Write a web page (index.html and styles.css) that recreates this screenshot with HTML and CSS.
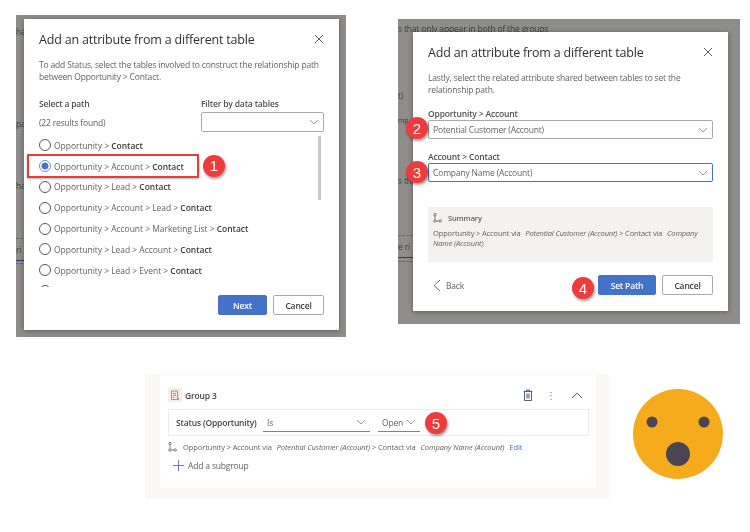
FILE: index.html
```html
<!DOCTYPE html>
<html>
    <head>
        <title>Add an attribute from a different table</title>
        <link rel="stylesheet" href="styles.css">
    </head>
    <body>
        <div class="top-row">
            <section class="shot shot-left">
                <span class="peek" style="left:0;top:11px">ha</span>
                <span class="peek" style="left:0;top:103px">pa</span>
                <span class="peek" style="left:0;top:165px">ha</span>
                <span class="peek" style="left:0;top:229px">ri</span>
                <i class="peek-dash" style="top:223px"></i>
                <i class="peek-blue" style="top:245px"></i>
                <i class="peek-dash" style="top:248px"></i>
                <div class="dialog">
                    <div class="dialog-head">
                        <h1>Add an attribute from a different table</h1>
                        <svg class="close" width="10" height="10" viewBox="0 0 10 10"><path d="M1 1l8 8M9 1l-8 8"/></svg>
                    </div>
                    <p class="intro">To add Status, select the tables involved to construct the relationship path between Opportunity &gt; Contact.</p>
                    <div class="path-head">
                        <div>
                            <div class="label">Select a path</div>
                            <div class="found">(22 results found)</div>
                        </div>
                        <div>
                            <div class="label">Filter by data tables</div>
                            <div class="select filter-select">
                                <svg class="chev" width="10" height="6" viewBox="0 0 10 6"><path d="M1 1l4 4 4-4"/></svg>
                            </div>
                        </div>
                    </div>
                    <div class="path-list">
                        <div class="scrollbar"></div>
                        <div class="path"><span class="radio"></span><span>Opportunity &gt; <b>Contact</b></span></div>
                        <div class="path path-picked">
                            <span class="radio radio-on"></span><span>Opportunity &gt; Account &gt; <b>Contact</b></span>
                            <span class="picked-box"></span>
                            <span class="badge badge-one">1</span>
                        </div>
                        <div class="path"><span class="radio"></span><span>Opportunity &gt; Lead &gt; <b>Contact</b></span></div>
                        <div class="path"><span class="radio"></span><span>Opportunity &gt; Account &gt; Lead &gt; <b>Contact</b></span></div>
                        <div class="path"><span class="radio"></span><span>Opportunity &gt; Account &gt; Marketing List &gt; <b>Contact</b></span></div>
                        <div class="path"><span class="radio"></span><span>Opportunity &gt; Lead &gt; Account &gt; <b>Contact</b></span></div>
                        <div class="path"><span class="radio"></span><span>Opportunity &gt; Lead &gt; Event &gt; <b>Contact</b></span></div>
                        <div class="path"><span class="radio"></span></div>
                    </div>
                    <div class="dialog-foot left-foot">
                        <button class="btn btn-blue btn-next">Next</button>
                        <button class="btn">Cancel</button>
                    </div>
                </div>
            </section>

            <section class="shot shot-right">
                <span class="peek" style="left:0;top:4px">s that only appear in both of the groups</span>
                <span class="peek" style="left:0;top:71px">t)</span>
                <span class="peek peek-small" style="left:0;top:96px">mp</span>
                <span class="peek" style="left:0;top:156px">s th</span>
                <span class="peek" style="left:0;top:222px">e ri</span>
                <i class="peek-dash" style="top:216px"></i>
                <i class="peek-blue" style="top:238px"></i>
                <i class="peek-dash" style="top:242px"></i>
                <div class="dialog">
                    <div class="dialog-head">
                        <h1>Add an attribute from a different table</h1>
                        <svg class="close" width="10" height="10" viewBox="0 0 10 10"><path d="M1 1l8 8M9 1l-8 8"/></svg>
                    </div>
                    <p class="intro">Lastly, select the related attribute shared between tables to set the relationship path.</p>
                    <div class="field field-first">
                        <div class="label">Opportunity &gt; Account</div>
                        <div class="select">
                            Potential Customer (Account)
                            <svg class="chev" width="10" height="6" viewBox="0 0 10 6"><path d="M1 1l4 4 4-4"/></svg>
                        </div>
                        <span class="badge badge-field">2</span>
                    </div>
                    <div class="field">
                        <div class="label">Account &gt; Contact</div>
                        <div class="select select-focus">
                            Company Name (Account)
                            <svg class="chev" width="10" height="6" viewBox="0 0 10 6"><path d="M1 1l4 4 4-4"/></svg>
                        </div>
                        <span class="badge badge-field">3</span>
                    </div>
                    <div class="summary">
                        <div class="summary-title">
                            <svg class="path-icon" width="9" height="10" viewBox="0 0 9 10"><circle cx="2" cy="1.6" r="1.2"/><circle cx="2" cy="8" r="1.2"/><circle cx="7.2" cy="8" r="1.2"/><path d="M2 3v3.600M3.400 8h2.400"/></svg>
                            Summary
                        </div>
                        <p>Opportunity &gt; Account via <em>Potential Customer (Account)</em> &gt; Contact via <em>Company</em><br><em class="em-wrap">Name (Account)</em></p>
                    </div>
                    <div class="dialog-foot right-foot">
                        <div class="back">
                            <svg width="8" height="13" viewBox="0 0 8 13"><path d="M7 1L1 6.500 7 12"/></svg>
                            Back
                        </div>
                        <div class="foot-buttons">
                            <span class="badge badge-four">4</span>
                            <button class="btn btn-blue btn-set">Set Path</button>
                            <button class="btn">Cancel</button>
                        </div>
                    </div>
                </div>
            </section>
        </div>

        <div class="bottom-row">
            <section class="group-wrap">
                <div class="group">
                    <div class="group-head">
                        <span class="group-icon">
                            <svg width="10" height="11" viewBox="0 0 10 11"><path d="M1.500 1h6v8.500h-6zM3 3.500h3M3 5.500h3M3 7.500h1.500"/><path d="M8.500 8v2"/></svg>
                        </span>
                        <span class="group-name">Group 3</span>
                        <div class="group-tools">
                            <svg class="trash" width="10" height="12" viewBox="0 0 10 12"><path d="M1.500 2.500h7v9h-7zM.5 2.500h9M3.500 2.500v-1.500h3v1.500"/><path class="trash-fill" d="M3.200 4.500h3.600v5h-3.600z"/></svg>
                            <span class="dots">&#8942;</span>
                            <svg class="chev-up" width="12" height="7" viewBox="0 0 12 7"><path d="M1 6l5-5 5 5"/></svg>
                        </div>
                    </div>
                    <div class="condition">
                        <span class="cond-name">Status (Opportunity)</span>
                        <div class="cond-drop cond-op">
                            Is
                            <svg class="chev" width="10" height="6" viewBox="0 0 10 6"><path d="M1 1l4 4 4-4"/></svg>
                        </div>
                        <div class="cond-drop cond-value">
                            Open
                            <svg class="chev" width="10" height="6" viewBox="0 0 10 6"><path d="M1 1l4 4 4-4"/></svg>
                        </div>
                        <span class="badge badge-five">5</span>
                    </div>
                    <div class="path-line">
                        <svg class="path-icon" width="9" height="10" viewBox="0 0 9 10"><circle cx="2" cy="1.6" r="1.2"/><circle cx="2" cy="8" r="1.2"/><circle cx="7.2" cy="8" r="1.2"/><path d="M2 3v3.600M3.400 8h2.400"/></svg>
                        <span>Opportunity &gt; Account via <em>Potential Customer (Account)</em> &gt; Contact via <em>Company Name (Account)</em></span>
                        <a class="edit">Edit</a>
                    </div>
                    <div class="add-sub">
                        <svg width="11" height="11" viewBox="0 0 11 11"><path d="M5.500 0v11M0 5.500h11"/></svg>
                        Add a subgroup
                    </div>
                </div>
            </section>
            <svg class="face" width="90" height="90" viewBox="0 0 90 90">
                <circle cx="45" cy="45" r="45" fill="#f5ab1b"/>
                <circle cx="19" cy="33" r="5.500" fill="#4a4552"/>
                <circle cx="71" cy="33" r="5.500" fill="#4a4552"/>
                <circle cx="45" cy="65" r="12" fill="#4a4552"/>
            </svg>
        </div>
    </body>
</html>
```

FILE: styles.css
```css
body{
    margin: 0;
    width: 750px;
    height: 532px;
    overflow: hidden;
    background-color: white;
    font-family: "Open Sans", "Liberation Sans", sans-serif;
    color: rgb(100, 98, 96);
    font-size: 8.5px;
    letter-spacing: -0.17px;
}
b{
    font-weight: 600;
    color: rgb(60, 58, 56);
}
em{
    margin-left: 3px;
    font-style: italic;
}
.em-wrap{
    margin-left: 0;
}
.top-row{
    display: flex;
    align-items: flex-start;
    height: 374px;
}
.shot{
    position: relative;
    overflow: hidden;
    background-color: rgb(142, 141, 140);
    box-sizing: border-box;
    filter: blur(0.35px);
}
.shot-left{
    width: 330px;
    height: 322px;
    margin: 15px 0 0 16px;
    padding: 4px 7px 7px 8px;
}
.shot-right{
    width: 342px;
    height: 305px;
    margin: 19px 0 0 52px;
    padding: 13px 12px 13px 15px;
}
.peek{
    position: absolute;
    font-size: 8.5px;
    line-height: 12px;
    white-space: nowrap;
    color: rgb(60, 60, 60);
}
.peek-small{
    font-size: 7px;
}
.peek-dash{
    position: absolute;
    left: 0;
    width: 15px;
    border-top: 1px dashed rgb(105, 105, 105);
}
.peek-blue{
    position: absolute;
    left: 0;
    width: 15px;
    height: 1px;
    background-color: rgb(50, 60, 110);
}
.dialog{
    position: relative;
    height: 100%;
    box-sizing: border-box;
    padding: 11px 15px 0 15px;
    background-color: white;
    box-shadow: 0 1px 5px rgba(0, 0, 0, 0.35);
}
.dialog-head{
    display: flex;
    justify-content: space-between;
    align-items: center;
    height: 18px;
}
h1{
    margin: 0;
    font-size: 12.5px;
    font-weight: 500;
    letter-spacing: -0.2px;
    color: rgb(50, 49, 48);
}
.close path{
    fill: none;
    stroke: rgb(96, 94, 92);
}
.intro{
    margin: 11px 0 0 0;
    font-size: 8.5px;
    line-height: 12px;
}
.path-head{
    display: grid;
    grid-template-columns: 162px 123px;
    margin-top: 15px;
}
.label{
    font-size: 8.5px;
    font-weight: 600;
    line-height: 12px;
    color: rgb(80, 78, 76);
}
.found{
    margin-top: 7px;
    line-height: 12px;
}
.select{
    position: relative;
    display: flex;
    align-items: center;
    box-sizing: border-box;
    height: 19px;
    padding-left: 4px;
    font-size: 8.5px;
    background-color: white;
    border: 1px solid rgb(170, 170, 170);
    border-radius: 2px;
}
.filter-select{
    height: 20px;
    margin-top: 2px;
}
.select-focus{
    border-color: rgb(68, 114, 201);
}
.chev{
    position: absolute;
    right: 4px;
    top: 50%;
    margin-top: -3px;
}
.chev path{
    fill: none;
    stroke: rgb(160, 158, 156);
}
.path-list{
    position: relative;
    height: 152px;
    overflow: hidden;
    margin: 3px 0 0 -15px;
    padding-left: 15px;
    margin-right: -15px;
}
.scrollbar{
    position: absolute;
    left: 294px;
    top: 1px;
    width: 3px;
    height: 64px;
    background-color: rgb(200, 200, 200);
}
.path{
    position: relative;
    display: flex;
    align-items: center;
    gap: 3px;
    height: 20.8px;
    white-space: pre;
    letter-spacing: -0.04px;
}
.radio{
    box-sizing: border-box;
    width: 12px;
    height: 12px;
    border: 1px solid rgb(85, 85, 85);
    border-radius: 50%;
    background-color: white;
}
.radio-on{
    border-color: rgb(110, 145, 215);
    background: radial-gradient(circle, rgb(68, 114, 201) 3.2px, white 3.8px);
}
.picked-box{
    position: absolute;
    left: -12px;
    top: -2px;
    width: 172px;
    height: 24px;
    box-sizing: border-box;
    border: 2px solid rgb(226, 62, 62);
    box-shadow: 0 1px 2px rgba(0, 0, 0, 0.3);
}
.badge{
    position: absolute;
    width: 22px;
    height: 22px;
    display: flex;
    align-items: center;
    justify-content: center;
    border-radius: 50%;
    background-color: rgb(239, 59, 59);
    color: white;
    font-family: "Liberation Sans", sans-serif;
    font-size: 15px;
    letter-spacing: 0;
    box-shadow: 1px 2px 3px rgba(0, 0, 0, 0.4);
}
.badge-one{
    left: 164px;
    top: -1px;
}
.dialog-foot{
    display: flex;
}
.left-foot{
    justify-content: flex-end;
    gap: 6px;
    margin-top: 8px;
}
.btn{
    box-sizing: border-box;
    width: 51px;
    height: 20px;
    padding: 0;
    font-family: inherit;
    font-size: 8.5px;
    font-weight: 600;
    letter-spacing: inherit;
    color: rgb(60, 58, 56);
    background-color: white;
    border: 1px solid rgb(170, 170, 170);
    border-radius: 2px;
}
.btn-blue{
    color: white;
    background-color: rgb(68, 114, 201);
    border-color: rgb(68, 114, 201);
}
.btn-next{
    width: 49px;
}
.btn-set{
    width: 58px;
}
.field{
    position: relative;
    margin-top: 12px;
}
.badge-field{
    left: -22px;
    bottom: -1px;
}
.field-first .badge-field{
    bottom: 0;
}
.summary{
    margin-top: 25px;
    height: 55px;
    box-sizing: border-box;
    padding: 5px 5px 0 5px;
    background-color: rgb(243, 242, 241);
    font-size: 7.5px;
    letter-spacing: -0.14px;
}
.summary-title{
    display: flex;
    align-items: center;
    gap: 6px;
    height: 12px;
    font-weight: 600;
}
.summary p{
    margin: 4px 0 0 0;
    line-height: 10px;
}
.path-icon circle, .path-icon path{
    fill: none;
    stroke: rgb(96, 94, 92);
    stroke-width: 0.8;
}
.right-foot{
    justify-content: space-between;
    align-items: center;
    margin-top: 13px;
}
.back{
    display: flex;
    align-items: center;
    gap: 5px;
    padding-left: 5px;
}
.back path{
    fill: none;
    stroke: rgb(68, 114, 201);
}
.foot-buttons{
    position: relative;
    display: flex;
    gap: 6px;
}
.badge-four{
    left: -26px;
    top: 2px;
}
.bottom-row{
    display: flex;
    align-items: flex-start;
}
.group-wrap{
    width: 464px;
    height: 125px;
    margin-left: 145px;
    box-sizing: border-box;
    padding: 1px 13px 11px 15px;
    background-color: rgb(250, 249, 248);
    filter: blur(0.35px);
}
.group{
    height: 100%;
    box-sizing: border-box;
    padding: 13px 7px 0 8px;
    background-color: white;
}
.group-head{
    display: flex;
    align-items: center;
    height: 14px;
}
.group-icon{
    display: flex;
    align-items: center;
    justify-content: center;
    width: 14px;
    height: 14px;
    background-color: rgb(249, 236, 230);
}
.group-icon path{
    fill: none;
    stroke: rgb(170, 110, 90);
    stroke-width: 0.8;
}
.group-name{
    margin-left: 3px;
    font-size: 8.5px;
    font-weight: 600;
    color: rgb(70, 68, 66);
}
.group-tools{
    display: flex;
    align-items: center;
    margin-left: auto;
    margin-right: 6px;
}
.trash path{
    fill: none;
    stroke: rgb(90, 95, 120);
}
.trash .trash-fill{
    fill: rgb(150, 155, 175);
    stroke: none;
}
.dots{
    margin-left: 13px;
    font-size: 10px;
    line-height: 12px;
    color: rgb(120, 120, 140);
}
.chev-up{
    margin-left: 15px;
}
.chev-up path{
    fill: none;
    stroke: rgb(90, 100, 170);
}
.condition{
    position: relative;
    display: flex;
    align-items: center;
    box-sizing: border-box;
    height: 27px;
    margin-top: 7px;
    padding-left: 7px;
    border: 1px solid rgb(237, 235, 233);
}
.cond-name{
    width: 87px;
    font-size: 8.5px;
    font-weight: 600;
    color: rgb(70, 68, 66);
}
.cond-drop{
    position: relative;
    box-sizing: border-box;
    height: 19px;
    padding: 4px 0 0 4px;
    border-bottom: 1px solid rgb(130, 130, 130);
    font-size: 8.5px;
    line-height: 12px;
}
.cond-op{
    width: 107px;
}
.cond-value{
    width: 42px;
    margin-left: 8px;
}
.badge-five{
    left: 256px;
    top: 2px;
}
.path-line{
    display: flex;
    align-items: center;
    gap: 6px;
    height: 12px;
    margin-top: 5px;
    font-size: 7.5px;
    letter-spacing: -0.09px;
    white-space: pre;
}
.edit{
    margin-left: -1px;
    color: rgb(68, 114, 201);
}
.add-sub{
    display: flex;
    align-items: center;
    gap: 4px;
    margin-top: 7px;
    padding-left: 5px;
    font-size: 8.5px;
}
.add-sub path{
    stroke: rgb(110, 120, 190);
}
.face{
    margin: 15px 0 0 24px;
}
```
